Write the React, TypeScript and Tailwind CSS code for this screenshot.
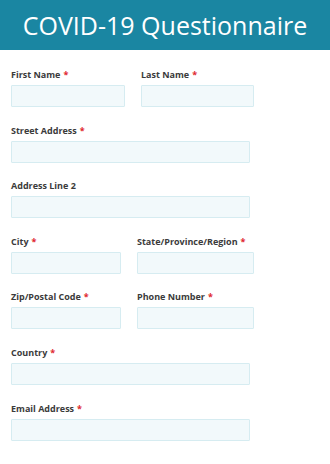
import React from "react";

type Field = {
  label: string;
  required?: boolean;
  width: string;
};

// One label + input pair
function FormField({ label, required, width }: Field) {
  return (
    <div className="flex flex-col">
      <label className="h-[14px] text-[9px] font-bold leading-[14px] text-[#3b3b3b]">
        {label}
        {required && <span className="ml-[3px] text-[#e0282e]">*</span>}
      </label>
      <input
        type="text"
        className={`mt-[3px] h-[22px] rounded-[1px] border border-[#d6ecf1] bg-[#f2f9fb] outline-none ${width}`}
      />
    </div>
  );
}

export default function App() {
  return (
    <div
      className="h-[464px] w-[330px] overflow-hidden bg-white"
      style={{ fontFamily: '"Open Sans", "Liberation Sans", sans-serif' }}
    >
      {/* Header */}
      <div className="flex h-[50px] items-center justify-center bg-[#1a86a2]">
        <h1 className="text-[25px] font-normal leading-none text-white">
          COVID-19 Questionnaire
        </h1>
      </div>

      {/* Form */}
      <form className="flex flex-col gap-[16.6px] pl-[11px] pt-[18px]">
        <div className="flex gap-[16px]">
          <FormField label="First Name" required width="w-[114px]" />
          <FormField label="Last Name" required width="w-[113px]" />
        </div>
        <FormField label="Street Address" required width="w-[239px]" />
        <FormField label="Address Line 2" width="w-[239px]" />
        <div className="flex gap-[16px]">
          <FormField label="City" required width="w-[110px]" />
          <FormField label="State/Province/Region" required width="w-[117px]" />
        </div>
        <div className="flex gap-[16px]">
          <FormField label="Zip/Postal Code" required width="w-[110px]" />
          <FormField label="Phone Number" required width="w-[117px]" />
        </div>
        <FormField label="Country" required width="w-[239px]" />
        <FormField label="Email Address" required width="w-[239px]" />
      </form>
    </div>
  );
}
